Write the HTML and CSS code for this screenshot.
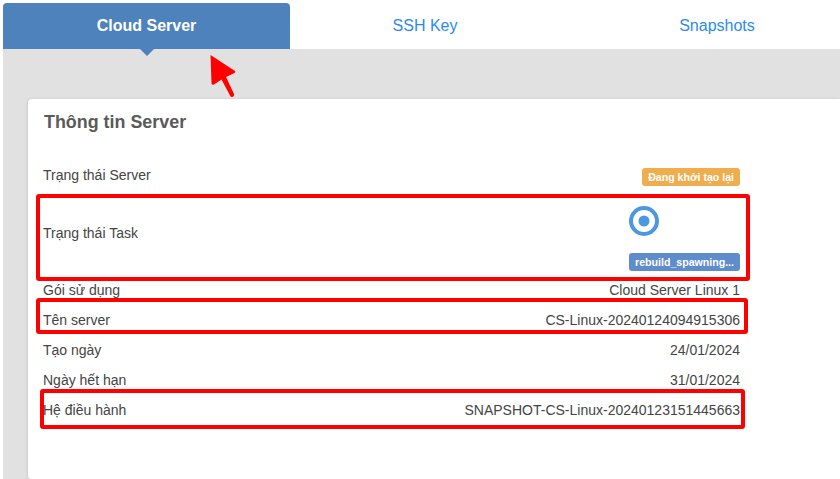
FILE: index.html
```html
<!DOCTYPE html>
<html lang="vi">
<head>
<meta charset="utf-8">
<title>Thông tin Server</title>
<link rel="stylesheet" href="styles.css">
</head>
<body>
<div class="page">
  <nav class="tabs">
    <a class="tab active">Cloud Server</a>
    <a class="tab">SSH Key</a>
    <a class="tab">Snapshots</a>
  </nav>
  <main class="content">
    <section class="card">
      <h2 class="title">Thông tin Server</h2>
      <div class="rows">
        <div class="row"><span>Trạng thái Server</span><span class="badge orange">Đang khởi tạo lại</span></div>
        <div class="row task"><span>Trạng thái Task</span>
          <div class="task-value">
            <svg class="spinner" width="30" height="30" viewBox="0 0 30 30"><circle cx="15" cy="15" r="13" fill="none" stroke="#4a98e0" stroke-width="4"/><circle cx="15" cy="15" r="5.500" fill="#4a98e0"/></svg>
            <span class="badge blue">rebuild_spawning...</span>
          </div>
        </div>
        <div class="row"><span>Gói sử dụng</span><span>Cloud Server Linux 1</span></div>
        <div class="row"><span>Tên server</span><span>CS-Linux-20240124094915306</span></div>
        <div class="row"><span>Tạo ngày</span><span>24/01/2024</span></div>
        <div class="row"><span>Ngày hết hạn</span><span>31/01/2024</span></div>
        <div class="row"><span>Hệ điều hành</span><span>SNAPSHOT-CS-Linux-20240123151445663</span></div>
      </div>
    </section>
  </main>
  <div class="mark mark-task"></div>
  <div class="mark mark-name"></div>
  <div class="mark mark-os"></div>
  <svg class="arrow" width="28" height="44" viewBox="0 0 28 44"><path d="M0.5 1 L25 17 Q26 18 24.500 19 L16 23 L24 40 Q24.500 42.500 22.500 43 Q21 43.500 20 41.500 L11.500 25.500 L4 30.500 Q1.500 31.500 1.500 29 Z" fill="#fe0000"/></svg>
</div>
</body>
</html>
```
FILE: styles.css
```css
* { box-sizing: border-box; }
html, body { margin: 0; height: 100%; overflow: hidden; background: #fff; }
body { font-family: "Liberation Sans", Arial, sans-serif; color: #444; font-size: 14px; }
.page { position: relative; width: 840px; height: 479px; overflow: hidden; padding: 3px 0 0 3px; display: flex; flex-direction: column; }
.tabs { display: grid; grid-template-columns: 287px 270px 314px; height: 46px; flex: none; }
.tab { display: flex; align-items: center; justify-content: center; font-size: 16px; color: #2b8af0; position: relative; padding-bottom: 1px; }
.tab.active { background: #4d82bc; color: #fff; font-weight: bold; border-radius: 4px 4px 0 0; }
.tab.active::after { content: ""; position: absolute; left: 50%; bottom: -7px; margin-left: -7px; border: 7px solid transparent; border-top-color: #4d82bc; border-bottom-width: 0; }
.content { flex: 1; background: #e1e1e1; padding: 50px 0 0 25px; }
.card { background: #fff; height: 380px; border-radius: 4px 0 0 4px; padding: 12px 100px 0 15px; box-shadow: -1px 0 3px rgba(0,0,0,.1); }
.title { margin: 0 0 0 1px; font-size: 17.900px; line-height: 22px; font-weight: bold; color: #5a5a5a; }
.rows { margin-top: 27px; }
.row { display: flex; justify-content: space-between; align-items: center; height: 30px; }
.row.task { height: 85px; }
.task-value { display: flex; flex-direction: column; align-items: flex-start; gap: 17px; align-self: flex-start; margin-top: 16px; }
.spinner { display: block; }
.badge { font-size: 10.600px; font-weight: bold; color: #fff; line-height: 18px; height: 18px; padding: 0 6px; border-radius: 3px; }
.orange { background: #f0ad4e; margin-top: 4px; }
.blue { background: #5f8ccb; }
.mark { position: absolute; border: 4px solid #fe0000; border-radius: 3px; pointer-events: none; }
.mark-task { left: 36px; top: 194px; width: 714px; height: 87px; }
.mark-name { left: 36px; top: 298px; width: 712px; height: 36px; }
.mark-os { left: 40px; top: 389px; width: 705px; height: 40px; }
.arrow { position: absolute; left: 210px; top: 54px; }
```
